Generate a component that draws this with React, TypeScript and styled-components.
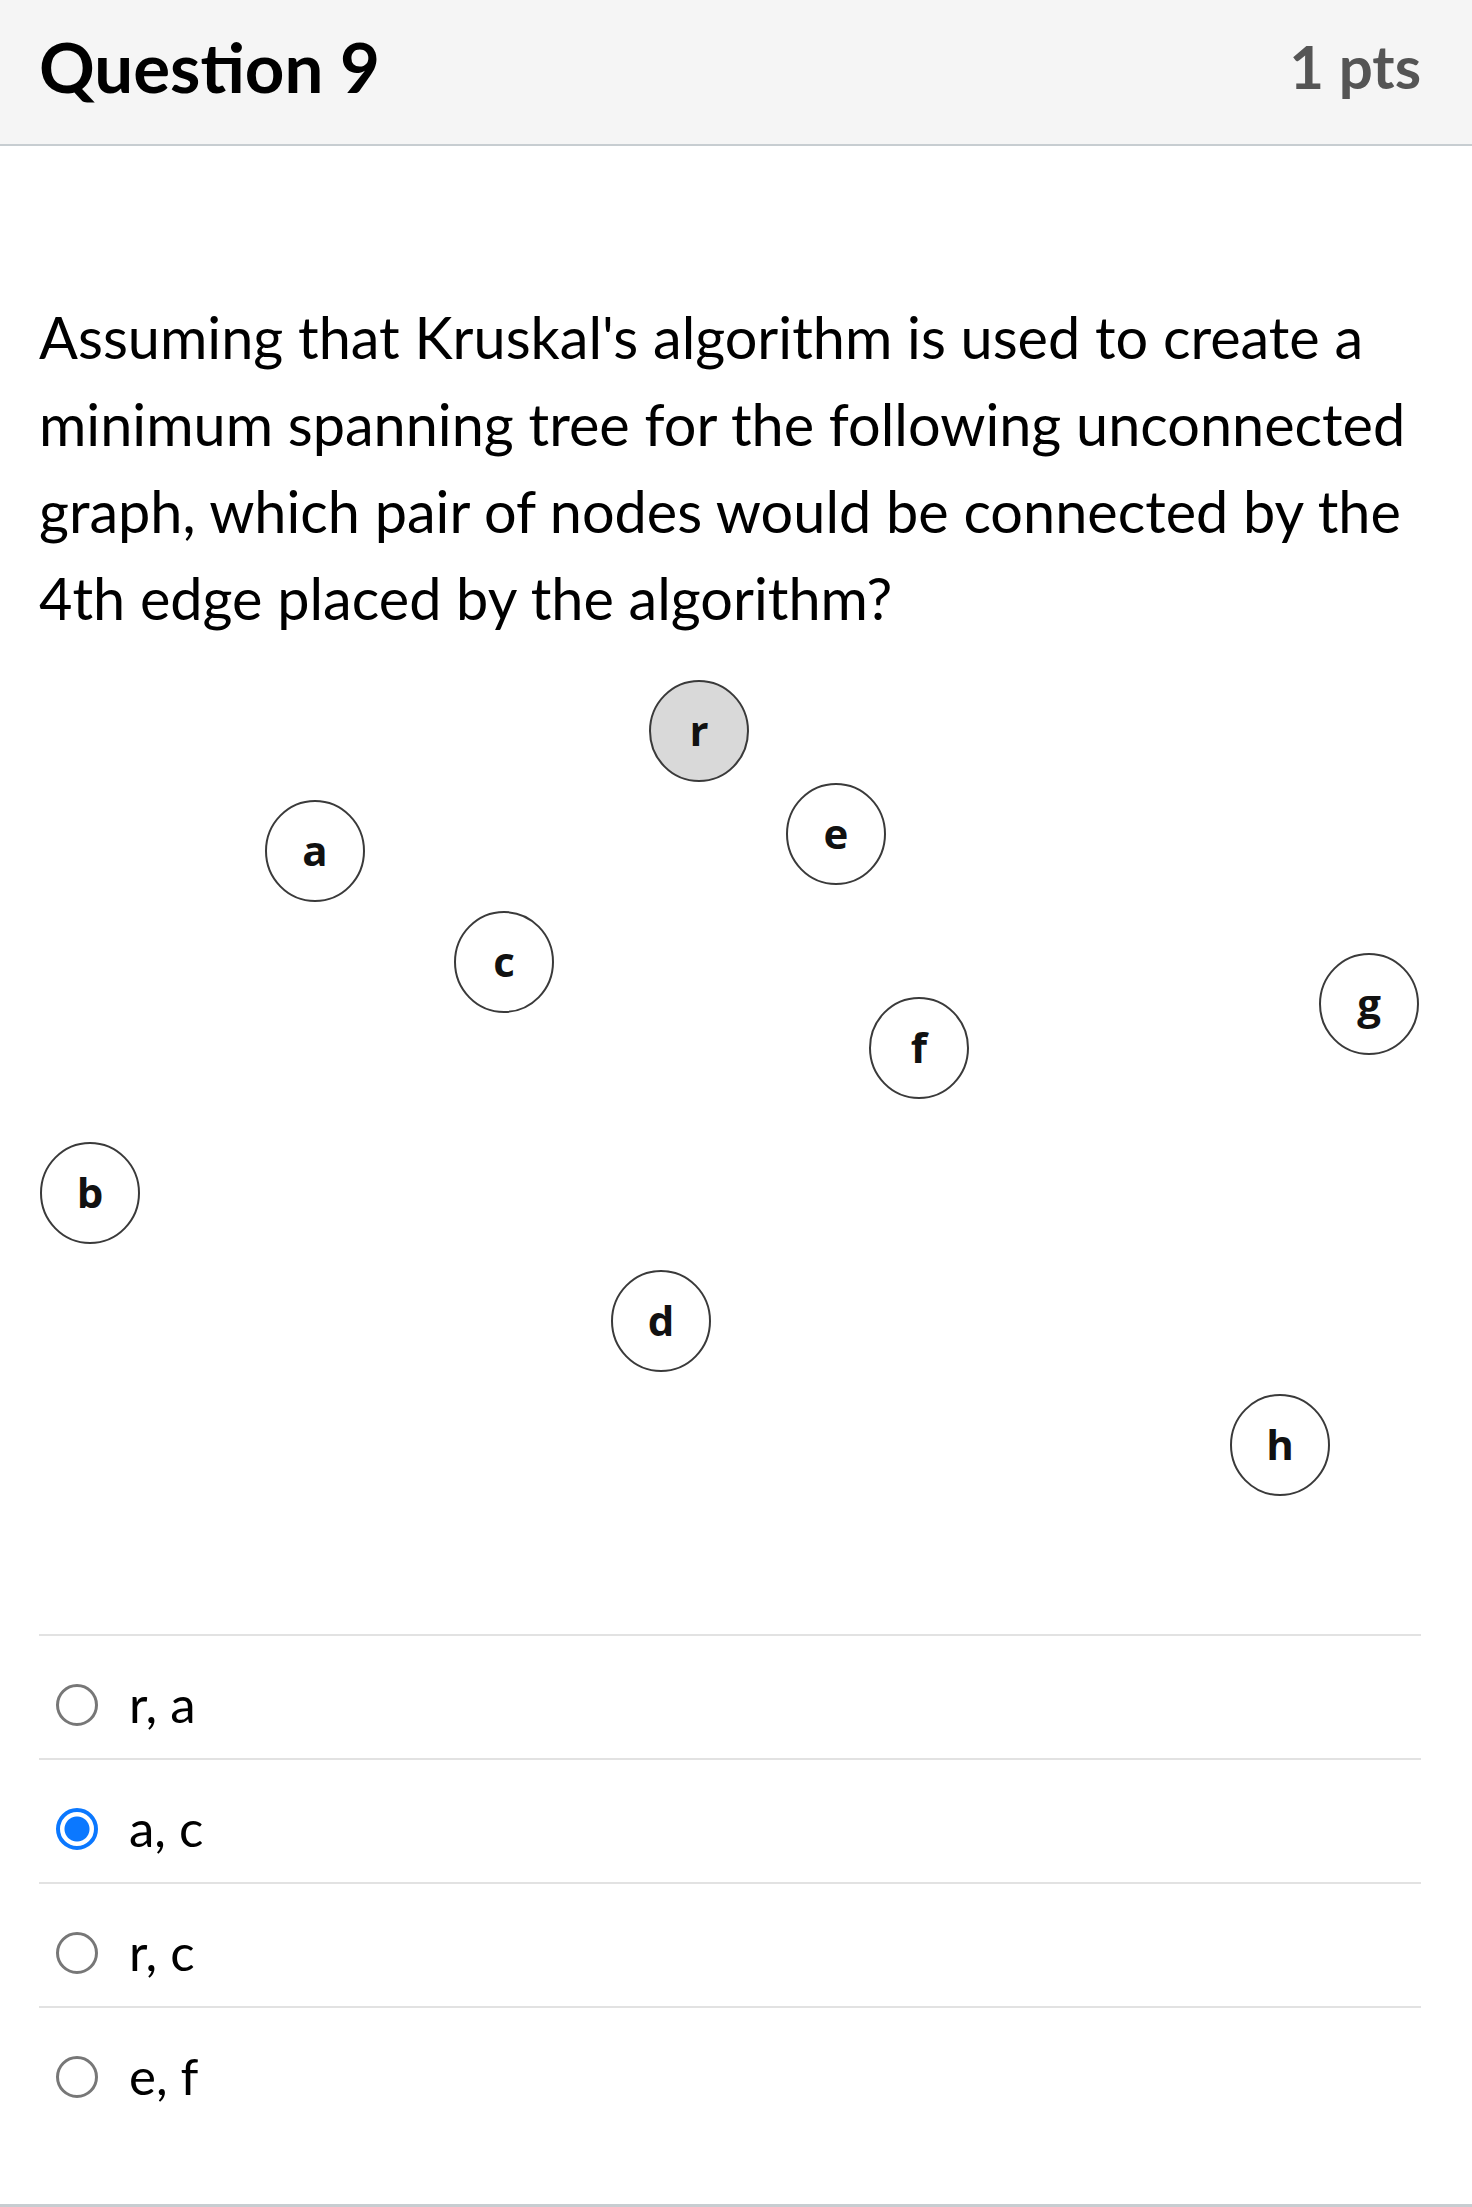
import React from "react";
import styled, { createGlobalStyle } from "styled-components";

const GlobalStyle = createGlobalStyle`
  html, body {
    margin: 0;
    padding: 0;
    background: #ffffff;
  }
  body {
    font-family: Lato, "Noto Sans", "Liberation Sans", sans-serif;
    color: #000;
  }
`;

type GraphNode = { id: string; x: number; y: number; root?: boolean };

// node centres, measured relative to the top-left of the figure
const nodes: GraphNode[] = [
  { id: "r", x: 660, y: 90, root: true },
  { id: "a", x: 276, y: 210 },
  { id: "e", x: 797, y: 193 },
  { id: "c", x: 465, y: 321 },
  { id: "g", x: 1330, y: 363 },
  { id: "f", x: 880, y: 407 },
  { id: "b", x: 51, y: 552 },
  { id: "d", x: 622, y: 680 },
  { id: "h", x: 1241, y: 804 },
];

const answers = [
  { label: "r, a", checked: false },
  { label: "a, c", checked: true },
  { label: "r, c", checked: false },
  { label: "e, f", checked: false },
];

const App = () => {
  return (
    <>
      <GlobalStyle />
      <Question>
        <Header>
          <Title>Question 9</Title>
          <Points>1 pts</Points>
        </Header>
        <Body>
          <QuestionText>
            Assuming that Kruskal's algorithm is used to create a minimum
            spanning tree for the following unconnected graph, which pair of
            nodes would be connected by the 4th edge placed by the algorithm?
          </QuestionText>
          <Figure viewBox="0 0 1382 993" width="1382" height="993">
            {nodes.map((n) => (
              <g key={n.id}>
                <ellipse
                  cx={n.x}
                  cy={n.y}
                  rx={49}
                  ry={50}
                  fill={n.root ? "#d9d9d9" : "#ffffff"}
                  stroke="#3a3a3a"
                  strokeWidth={2}
                />
                <text
                  x={n.x}
                  y={n.y + 15}
                  textAnchor="middle"
                  fontFamily='"Open Sans", "Liberation Sans", sans-serif'
                  fontWeight={700}
                  fontSize={42}
                  fill="#111"
                >
                  {n.id}
                </text>
              </g>
            ))}
          </Figure>
          <Answers>
            {answers.map((a) => (
              <AnswerRow key={a.label}>
                <Radio checked={a.checked} />
                <AnswerLabel>{a.label}</AnswerLabel>
              </AnswerRow>
            ))}
          </Answers>
        </Body>
      </Question>
    </>
  );
};

const Question = styled.section`
  width: 1472px;
  min-height: 2207px;
  box-sizing: border-box;
  border-bottom: 3px solid #c7cdd1;
`;

const Header = styled.header`
  height: 146px;
  box-sizing: border-box;
  background: #f5f5f5;
  border-bottom: 2px solid #c7cdd1;
  padding: 0 51px 12px 39px;
  display: flex;
  align-items: center;
  justify-content: space-between;
`;

const Title = styled.h2`
  margin: 0;
  font-size: 69px;
  font-weight: 700;
  color: #000;
`;

const Points = styled.div`
  font-size: 60px;
  font-weight: 700;
  color: #555555;
`;

const Body = styled.div`
  padding: 0 51px 0 39px;
  display: flex;
  flex-direction: column;
`;

const QuestionText = styled.p`
  margin: 147px 0 0;
  font-size: 57.6px;
  line-height: 87px;
  color: #000;
`;

const Figure = styled.svg`
  display: block;
`;

const Answers = styled.div`
  display: flex;
  flex-direction: column;
  padding-bottom: 71px;
`;

const AnswerRow = styled.label`
  height: 124px;
  box-sizing: border-box;
  border-top: 2px solid #e2e2e2;
  padding-top: 16px;
  display: flex;
  align-items: center;
  gap: 31px;
  padding-left: 17px;
`;

const Radio = styled.span<{ checked: boolean }>`
  width: 42px;
  height: 42px;
  box-sizing: border-box;
  border-radius: 50%;
  border: ${(p) => (p.checked ? "4px solid #0b78ff" : "3px solid #777777")};
  background: ${(p) =>
    p.checked
      ? "radial-gradient(circle, #0b78ff 0 12px, #ffffff 13px)"
      : "#ffffff"};
  flex-shrink: 0;
`;

const AnswerLabel = styled.span`
  font-size: 51px;
  line-height: 1;
  margin-top: -4px;
  color: #000;
`;

export default App;
